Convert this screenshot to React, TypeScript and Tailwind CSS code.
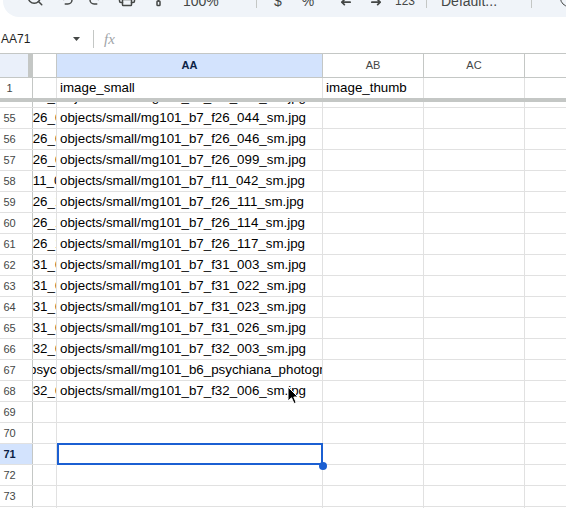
import React from "react";
import { Search, Undo2, Redo2, Printer, PaintRoller } from "lucide-react";

type Row = { n: number; z: string; a: string };

const dataRows: Row[] = [
  { n: 55, z: "f26_044", a: "objects/small/mg101_b7_f26_044_sm.jpg" },
  { n: 56, z: "f26_046", a: "objects/small/mg101_b7_f26_046_sm.jpg" },
  { n: 57, z: "f26_099", a: "objects/small/mg101_b7_f26_099_sm.jpg" },
  { n: 58, z: "f11_042", a: "objects/small/mg101_b7_f11_042_sm.jpg" },
  { n: 59, z: "f26_111", a: "objects/small/mg101_b7_f26_111_sm.jpg" },
  { n: 60, z: "f26_114", a: "objects/small/mg101_b7_f26_114_sm.jpg" },
  { n: 61, z: "f26_117", a: "objects/small/mg101_b7_f26_117_sm.jpg" },
  { n: 62, z: "f31_003", a: "objects/small/mg101_b7_f31_003_sm.jpg" },
  { n: 63, z: "f31_022", a: "objects/small/mg101_b7_f31_022_sm.jpg" },
  { n: 64, z: "f31_023", a: "objects/small/mg101_b7_f31_023_sm.jpg" },
  { n: 65, z: "f31_026", a: "objects/small/mg101_b7_f31_026_sm.jpg" },
  { n: 66, z: "f32_003", a: "objects/small/mg101_b7_f32_003_sm.jpg" },
  { n: 67, z: "psychiana", a: "objects/small/mg101_b6_psychiana_photograph_sm.jpg" },
  { n: 68, z: "f32_006", a: "objects/small/mg101_b7_f32_006_sm.jpg" },
];

const emptyRows = [69, 70, 71, 72, 73, 74];

function Cursor() {
  return (
    <svg
      className="absolute left-[230px] top-[5px] z-20"
      width="12"
      height="19"
      viewBox="0 0 12 19"
    >
      <path
        d="M1 1 L1 15 L4.5 11.8 L7 17.5 L9.2 16.6 L6.8 11 L11 11 Z"
        fill="#000"
        stroke="#fff"
        strokeWidth="1"
        strokeLinejoin="round"
      />
    </svg>
  );
}

function DataRow({ r }: { r: Row }) {
  return (
    <div className="flex h-[21px] border-b border-[#e1e1e1]">
      <div className="w-[33px] shrink-0 border-r border-[#c4c7c5] flex items-center">
        <span className="w-[19px] text-center text-[11px] text-[#444746]">{r.n}</span>
      </div>
      <div className="w-[24px] shrink-0 border-r border-[#e1e1e1] overflow-hidden whitespace-nowrap flex items-center">
        <span className="-ml-[4px] text-[13.33px] text-black">{r.z}</span>
      </div>
      <div className="relative w-[266px] shrink-0 border-r border-[#e1e1e1] flex items-center">
        <div className="w-full overflow-hidden whitespace-nowrap pl-[3px] text-[13.33px] text-black">
          {r.a}
        </div>
        {r.n === 68 && <Cursor />}
      </div>
      <div className="w-[101px] shrink-0 border-r border-[#e1e1e1]" />
      <div className="w-[101px] shrink-0 border-r border-[#e1e1e1]" />
      <div className="flex-1" />
    </div>
  );
}

function EmptyRow({ n }: { n: number }) {
  const sel = n === 71;
  return (
    <div className="flex h-[21px] border-b border-[#e1e1e1]">
      <div
        className={
          sel
            ? "w-[33px] shrink-0 border-r border-[#c4c7c5] flex items-center bg-[#d3e3fd]"
            : "w-[33px] shrink-0 border-r border-[#c4c7c5] flex items-center"
        }
      >
        <span
          className={
            sel
              ? "w-[19px] text-center text-[11px] font-bold text-[#0b1f45]"
              : "w-[19px] text-center text-[11px] text-[#444746]"
          }
        >
          {n}
        </span>
      </div>
      <div className="w-[24px] shrink-0 border-r border-[#e1e1e1]" />
      <div className="relative w-[266px] shrink-0 border-r border-[#e1e1e1]">
        {sel && (
          <div className="absolute left-0 -top-[1px] w-[266px] h-[22px] border-2 border-[#1b5fd2] z-10">
            <div className="absolute right-[-5.5px] bottom-[-6.5px] w-[8px] h-[8px] rounded-full bg-[#1b5fd2]" />
          </div>
        )}
      </div>
      <div className="w-[101px] shrink-0 border-r border-[#e1e1e1]" />
      <div className="w-[101px] shrink-0 border-r border-[#e1e1e1]" />
      <div className="flex-1" />
    </div>
  );
}

function ArrowGlyph({ dir }: { dir: "left" | "right" }) {
  return (
    <svg width="24" height="24" viewBox="0 0 24 24" fill="none" stroke="#444746" strokeWidth="2" strokeLinecap="round" strokeLinejoin="round">
      {dir === "left" ? (
        <path d="M17 17H7 M10 14 L7 17 L10 20" />
      ) : (
        <path d="M7 17H17 M14 14 L17 17 L14 20" />
      )}
    </svg>
  );
}

export default function App() {
  return (
    <div className="w-[566px] h-[508px] overflow-hidden bg-white font-['Liberation_Sans',Arial,sans-serif]">
      {/* toolbar (clipped) */}
      <div className="h-[17px] overflow-hidden ml-[3px] rounded-bl-[16px] bg-[#f0f4f9]">
        <div className="flex items-center h-[30px] -mt-[17px] text-[#444746] whitespace-nowrap">
          <div className="w-[26px] ml-[19px] shrink-0 flex justify-center">
            <Search size={18} strokeWidth={2} />
          </div>
          <div className="w-[26px] ml-[5px] shrink-0 flex justify-center">
            <Undo2 size={18} strokeWidth={2} />
          </div>
          <div className="w-[26px] ml-[4px] shrink-0 flex justify-center">
            <Redo2 size={18} strokeWidth={2} />
          </div>
          <div className="w-[26px] ml-[5px] shrink-0 flex justify-center">
            <Printer size={18} strokeWidth={2} />
          </div>
          <div className="w-[26px] ml-[7px] shrink-0 flex justify-center">
            <PaintRoller size={18} strokeWidth={2} />
          </div>
          <div className="w-[40px] ml-[10px] shrink-0 text-[14px] translate-y-[3px]">100%</div>
          <div className="w-[1px] h-[20px] ml-[33px] shrink-0 bg-[#c4c7c5]" />
          <div className="w-[20px] ml-[11px] shrink-0 text-center text-[14px] translate-y-[3px]">$</div>
          <div className="w-[20px] ml-[10px] shrink-0 text-center text-[14px] translate-y-[3px]">%</div>
          <div className="w-[20px] ml-[18px] shrink-0 flex justify-center">
            <ArrowGlyph dir="left" />
          </div>
          <div className="w-[20px] ml-[10px] shrink-0 flex justify-center">
            <ArrowGlyph dir="right" />
          </div>
          <div className="w-[20px] ml-[9px] shrink-0 text-center text-[12px] translate-y-[3px]">123</div>
          <div className="w-[1px] h-[20px] ml-[11px] shrink-0 bg-[#c4c7c5]" />
          <div className="w-[80px] ml-[14px] shrink-0 text-[14px] translate-y-[3px]">Default...</div>
          <div className="w-[1px] h-[20px] ml-[10px] shrink-0 bg-[#c4c7c5]" />
          <div className="w-[18px] h-[18px] ml-[28px] shrink-0 rounded-full border-[1.5px] border-[#444746]" />
        </div>
      </div>

      {/* formula bar */}
      <div className="h-[36px] pt-[8px] flex items-center">
        <span className="w-[73px] pl-[1px] text-[12px] text-[#1f1f1f]">AA71</span>
        <svg width="7" height="4" viewBox="0 0 7 4" className="shrink-0">
          <path d="M0 0 L7 0 L3.5 4 Z" fill="#444746" />
        </svg>
        <div className="w-[1px] h-[18px] ml-[13px] bg-[#c4c7c5]" />
        <span className="ml-[10px] font-['Liberation_Serif',serif] italic text-[15px] text-[#a0a4a8]">fx</span>
      </div>

      {/* grid */}
      <div className="border-t border-[#c4c7c5]">
        {/* column header row */}
        <div className="flex h-[24px] border-b border-[#c4c7c5]">
          <div className="w-[28px] shrink-0 bg-[#eaf0fa]" />
          <div className="w-[5px] shrink-0 bg-[#c4c7c5]" />
          <div className="w-[24px] shrink-0 border-r border-[#c4c7c5]" />
          <div className="w-[266px] shrink-0 border-r border-[#c4c7c5] bg-[#d3e3fd] flex items-center justify-center text-[11px] font-bold text-[#0b1f45]">
            AA
          </div>
          <div className="w-[101px] shrink-0 border-r border-[#c4c7c5] flex items-center justify-center text-[11px] text-[#444746]">
            AB
          </div>
          <div className="w-[101px] shrink-0 border-r border-[#c4c7c5] flex items-center justify-center text-[11px] text-[#444746]">
            AC
          </div>
          <div className="flex-1" />
        </div>

        {/* row 1 */}
        <div className="flex h-[20px]">
          <div className="w-[33px] shrink-0 border-r border-[#c4c7c5] flex items-center">
            <span className="w-[19px] text-center text-[11px] text-[#444746]">1</span>
          </div>
          <div className="w-[24px] shrink-0 border-r border-[#e1e1e1]" />
          <div className="w-[266px] shrink-0 border-r border-[#e1e1e1] flex items-center pl-[3px] text-[13.33px] text-black">
            image_small
          </div>
          <div className="w-[101px] shrink-0 border-r border-[#e1e1e1] flex items-center pl-[3px] text-[13.33px] text-black">
            image_thumb
          </div>
          <div className="w-[101px] shrink-0 border-r border-[#e1e1e1]" />
          <div className="flex-1" />
        </div>

        {/* freeze bar */}
        <div className="h-[4px] bg-[#c4c7c5]" />

        {/* partial row 54 */}
        <div className="h-[6px] overflow-hidden border-b border-[#e1e1e1]">
          <div className="flex h-[20px] -mt-[15px]">
            <div className="w-[33px] shrink-0 border-r border-[#c4c7c5]" />
            <div className="w-[24px] shrink-0 border-r border-[#e1e1e1] overflow-hidden whitespace-nowrap flex items-center">
              <span className="-ml-[4px] text-[13.33px] text-black">f26_043</span>
            </div>
            <div className="w-[266px] shrink-0 border-r border-[#e1e1e1] flex items-center overflow-hidden whitespace-nowrap pl-[3px] text-[13.33px] text-black">
              objects/small/mg101_b7_f26_043_sm.jpg
            </div>
            <div className="w-[101px] shrink-0 border-r border-[#e1e1e1]" />
            <div className="w-[101px] shrink-0 border-r border-[#e1e1e1]" />
            <div className="flex-1" />
          </div>
        </div>

        {dataRows.map((r) => (
          <DataRow key={r.n} r={r} />
        ))}
        {emptyRows.map((n) => (
          <EmptyRow key={n} n={n} />
        ))}
      </div>
    </div>
  );
}
